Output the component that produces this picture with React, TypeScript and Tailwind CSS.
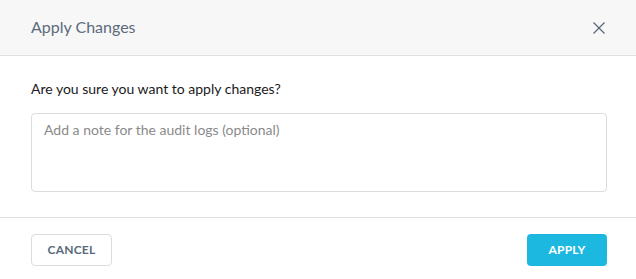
import React from 'react';

export default function App() {
  return (
    <div className="w-[636px] h-[279px] bg-white overflow-hidden font-['Lato',sans-serif]">
      {/* Header */}
      <div className="h-[56px] bg-[#f7f7f7] border-b border-[#e0e0e0] flex items-center justify-between pl-[31px] pr-[31px]">
        <h2 className="text-[16px] text-[#5b6b7c] leading-none pb-[1px]">Apply Changes</h2>
        <button className="w-[12px] h-[12px] flex items-center justify-center text-[#5b6b7c]">
          <svg width="12" height="12" viewBox="0 0 12 12" fill="none" stroke="currentColor" strokeWidth="1.3">
            <path d="M0.5 0.5L11.5 11.5M11.5 0.5L0.5 11.5" />
          </svg>
        </button>
      </div>

      {/* Body */}
      <div className="px-[31px] pt-[23px] pb-[25px] border-b border-[#e0e0e0]">
        <p className="text-[14px] leading-[20px] text-[#1a1a1a]">Are you sure you want to apply changes?</p>
        <textarea
          className="mt-[14px] block w-[576px] h-[79px] border border-[#dcdcdc] rounded-[4px] px-[12px] py-[6px] text-[14px] leading-[20px] text-[#333] placeholder:text-[#8a8a8a] resize-none outline-none"
          placeholder="Add a note for the audit logs (optional)"
        />
      </div>

      {/* Footer */}
      <div className="flex justify-between pl-[31px] pr-[29px] pt-[16px]">
        <button className="w-[81px] h-[32px] border border-[#dcdcdc] rounded-[4px] bg-white text-[12px] font-bold text-[#5b6b7c] tracking-[0.2px]">
          CANCEL
        </button>
        <button className="w-[80px] h-[32px] rounded-[4px] bg-[#1cb8e0] text-[12px] font-bold text-white tracking-[0.2px]">
          APPLY
        </button>
      </div>
    </div>
  );
}
